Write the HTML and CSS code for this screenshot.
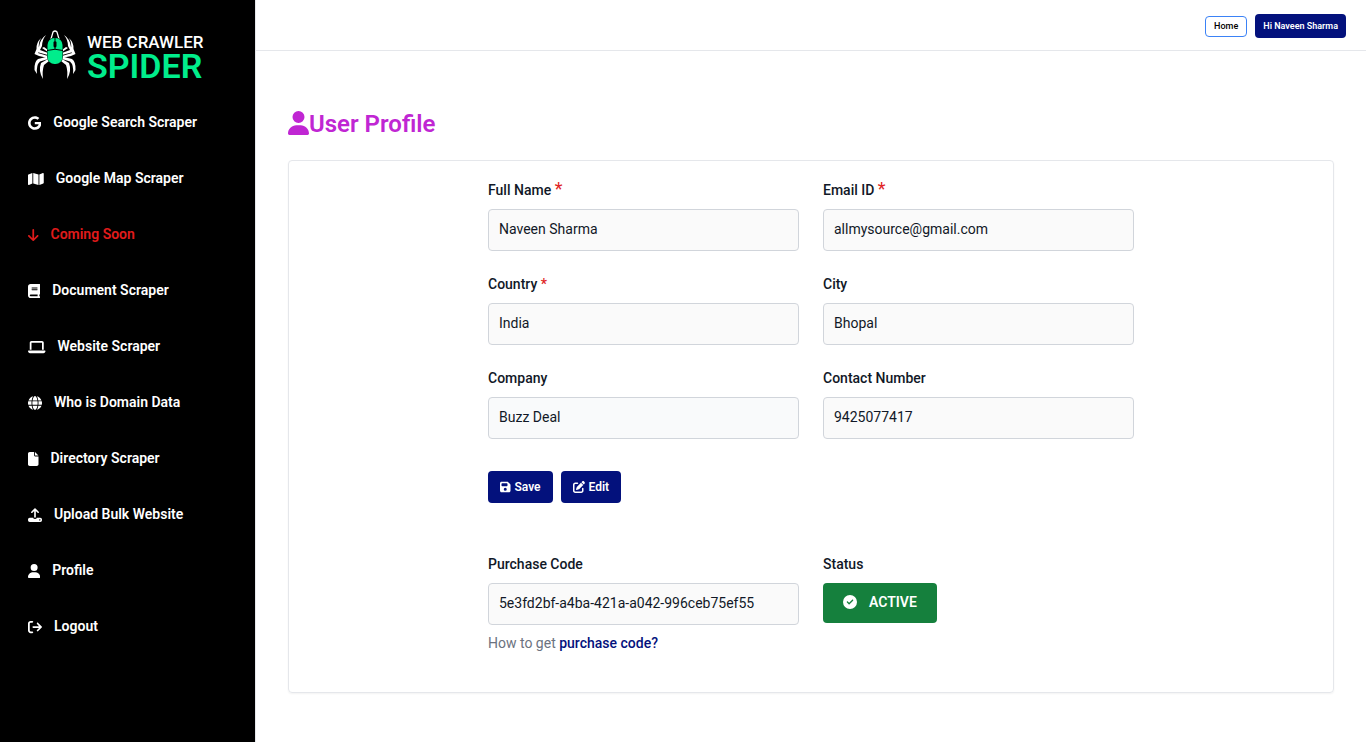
FILE: index.html
```html
<!DOCTYPE html>
<html lang="en">
<head>
<meta charset="utf-8">
<meta name="viewport" content="width=device-width, initial-scale=1">
<title>User Profile - Web Crawler Spider</title>
<link rel="stylesheet" href="styles.css">
</head>
<body>
<aside class="sidebar">
  <a class="brand" href="#">
    <svg class="brand-logo" viewBox="0 0 42 50" aria-hidden="true">
      <path d="M17 9 19 2Q21 0 23 2L25 9" fill="none" stroke="#fff" stroke-width="1.300"/>
      <g fill="#fff">
        <path d="M12 5Q6 9 5 17L3 22 14 25V23L6 20 8 16Q8 10 12 5ZM7 8Q2 13 2.500 19L.5 24 5 26 14 28V26L4 23 5 19Q4 13 7 8Z"/>
        <path d="M30 5Q36 9 37 17L39 22 28 25V23L36 20 34 16Q34 10 30 5ZM35 8Q40 13 39.500 19L41.500 24 37 26 28 28V26L38 23 37 19Q38 13 35 8Z"/>
        <path d="M10 17 14 20V22L8 18ZM32 17 28 20V22L34 18Z"/>
        <path d="M14 26.500 4 29Q0 32 .5 40L3 44Q2 35 6 31.500L14 29ZM14 29 7 33Q4 41 9 49Q8 41 10 35L15 31Z"/>
        <path d="M28 26.500 38 29Q42 32 41.500 40L39 44Q40 35 36 31.500L28 29ZM28 29 35 33Q38 41 33 49Q34 41 32 35L27 31Z"/>
      </g>
      <rect x="13" y="7.500" width="16" height="27" rx="8" fill="#000"/>
      <rect x="13.500" y="8" width="15" height="26" rx="7" fill="#00ed8c"/>
      <path d="M13 20.500Q21 18 29 20.500" fill="none" stroke="#000" stroke-width="1"/>
      <path d="M21 8V11M21 17V19" stroke="#000" stroke-width="1"/>
      <rect x="19.500" y="11" width="3" height="6.500" rx="1.500" fill="#000"/>
    </svg>
    <span class="brand-text"><span class="brand-top">WEB CRAWLER</span><span class="brand-bottom">SPIDER</span></span>
  </a>
  <nav class="nav">
    <a class="nav-link" href="#"><svg viewBox="0 0 488 512" aria-hidden="true"><path d="M488 261.800C488 403.300 391.100 504 248 504 110.800 504 0 393.200 0 256S110.800 8 248 8c66.800 0 123 24.500 166.300 64.900l-67.500 64.900C258.500 52.600 94.300 116.600 94.300 256c0 86.500 69.100 156.600 153.700 156.600 98.200 0 135-70.400 140.800-106.900H248v-85.300h236.100c2.300 12.700 3.900 24.900 3.900 41.400z"/></svg>Google Search Scraper</a>
    <a class="nav-link" href="#"><svg viewBox="0 0 576 512" aria-hidden="true"><path d="M384 476.100L192 421.200V35.900L384 90.800V476.100zm32-1.200V88.400L543.100 37.500c15.800-6.300 32.900 5.300 32.900 22.300V394.600c0 9.800-6 18.600-15.100 22.300L416 474.800zM15.100 95.100L160 37.200V423.600L32.900 474.500C17.100 480.800 0 469.200 0 452.200V117.400c0-9.800 6-18.600 15.100-22.300z"/></svg>Google Map Scraper</a>
    <a class="nav-link nav-soon" href="#"><svg viewBox="0 0 384 512" aria-hidden="true"><path d="M169.400 470.600c12.500 12.500 32.800 12.500 45.300 0l160-160c12.500-12.500 12.500-32.800 0-45.300s-32.800-12.500-45.300 0L224 370.800V64c0-17.700-14.300-32-32-32s-32 14.300-32 32v306.700L54.600 265.400c-12.500-12.500-32.800-12.500-45.300 0s-12.500 32.800 0 45.300l160 160z"/></svg>Coming Soon</a>
    <a class="nav-link" href="#"><svg viewBox="0 0 448 512" aria-hidden="true"><path d="M96 0C43 0 0 43 0 96V416c0 53 43 96 96 96H384h32c17.700 0 32-14.300 32-32s-14.300-32-32-32V384c17.700 0 32-14.300 32-32V32c0-17.700-14.300-32-32-32H384 96zm0 384H352v64H96c-17.700 0-32-14.300-32-32s14.300-32 32-32zm32-240c0-8.800 7.200-16 16-16H336c8.800 0 16 7.200 16 16s-7.200 16-16 16H144c-8.800 0-16-7.200-16-16zm16 48H336c8.800 0 16 7.200 16 16s-7.200 16-16 16H144c-8.800 0-16-7.200-16-16s7.200-16 16-16z"/></svg>Document Scraper</a>
    <a class="nav-link" href="#"><svg viewBox="0 0 640 512" aria-hidden="true"><path d="M128 32C92.700 32 64 60.700 64 96V352h64V96H512V352h64V96c0-35.300-28.700-64-64-64H128zM19.200 384C8.600 384 0 392.600 0 403.200C0 445.600 34.400 480 76.800 480H563.200c42.400 0 76.800-34.400 76.800-76.800c0-10.600-8.600-19.200-19.200-19.200H19.200z"/></svg>Website Scraper</a>
    <a class="nav-link" href="#"><svg viewBox="0 0 512 512" aria-hidden="true"><path d="M352 256c0 22.200-1.200 43.600-3.300 64H163.300c-2.200-20.400-3.300-41.800-3.300-64s1.200-43.600 3.300-64H348.700c2.200 20.400 3.300 41.800 3.300 64zm28.800-64H503.900c5.300 20.500 8.100 41.900 8.100 64s-2.800 43.500-8.100 64H380.800c2.100-20.600 3.200-42 3.200-64s-1.100-43.400-3.200-64zm112.600-32H376.700c-10-63.900-29.800-117.400-55.300-151.600c78.300 20.700 142 77.500 171.900 151.600zm-149.100 0H167.700c6.100-36.400 15.500-68.600 27-94.700c10.500-23.600 22.200-40.700 33.500-51.500C239.400 3.200 248.700 0 256 0s16.600 3.200 27.800 13.800c11.300 10.800 23 27.900 33.500 51.500c11.600 26 20.900 58.200 27 94.700zm-209 0H18.600C48.600 85.900 112.200 29.100 190.600 8.400C165.100 42.600 145.300 96.100 135.300 160zM8.100 192H131.200c-2.100 20.600-3.200 42-3.200 64s1.100 43.400 3.200 64H8.100C2.800 299.500 0 278.100 0 256s2.800-43.500 8.100-64zM194.700 446.600c-11.600-26-20.900-58.200-27-94.600H344.300c-6.100 36.400-15.500 68.600-27 94.600c-10.500 23.600-22.200 40.700-33.500 51.500C272.600 508.800 263.300 512 256 512s-16.600-3.200-27.800-13.800c-11.300-10.800-23-27.900-33.500-51.500zM135.300 352c10 63.900 29.800 117.400 55.300 151.600C112.200 482.900 48.600 426.100 18.600 352H135.300zm358.100 0c-30 74.100-93.600 130.900-171.900 151.600c25.500-34.200 45.200-87.700 55.300-151.600H493.400z"/></svg>Who is Domain Data</a>
    <a class="nav-link" href="#"><svg viewBox="0 0 384 512" aria-hidden="true"><path d="M0 64C0 28.700 28.700 0 64 0H224V128c0 17.700 14.300 32 32 32H384V448c0 35.300-28.700 64-64 64H64c-35.300 0-64-28.700-64-64V64zm384 64H256V0L384 128z"/></svg>Directory Scraper</a>
    <a class="nav-link" href="#"><svg viewBox="0 0 512 512" aria-hidden="true"><path d="M256 330V45M140 155 256 40 372 155" fill="none" stroke="currentColor" stroke-width="60" stroke-linecap="round" stroke-linejoin="round"/><path fill-rule="evenodd" d="M64 352H192Q192 400 256 400T320 352H448Q512 352 512 416V448Q512 512 448 512H64Q0 512 0 448V416Q0 352 64 352ZM432 408a24 24 0 1 0 .1 0Z"/></svg>Upload Bulk Website</a>
    <a class="nav-link" href="#"><svg viewBox="0 0 448 512" aria-hidden="true"><path d="M224 256A128 128 0 1 0 224 0a128 128 0 1 0 0 256zm-45.700 48C79.800 304 0 383.800 0 482.300C0 498.700 13.300 512 29.700 512H418.300c16.400 0 29.700-13.300 29.700-29.700C448 383.800 368.200 304 269.700 304H178.300z"/></svg>Profile</a>
    <a class="nav-link" href="#"><svg viewBox="0 0 512 512" aria-hidden="true"><path d="M502.600 278.600c12.500-12.500 12.500-32.800 0-45.300l-128-128c-12.500-12.500-32.800-12.500-45.300 0s-12.500 32.800 0 45.300L402.700 224H192c-17.700 0-32 14.300-32 32s14.300 32 32 32h210.700l-73.400 73.400c-12.500 12.500-12.500 32.800 0 45.300s32.800 12.500 45.300 0l128-128zM160 96c17.700 0 32-14.300 32-32s-14.300-32-32-32H96C43 32 0 75 0 128v256c0 53 43 96 96 96h64c17.700 0 32-14.300 32-32s-14.300-32-32-32H96c-17.700 0-32-14.300-32-32V128c0-17.700 14.300-32 32-32h64z"/></svg>Logout</a>
  </nav>
</aside>
<div class="page">
  <header class="topbar">
    <a class="btn-home" href="#">Home</a>
    <button class="btn-user" type="button">Hi Naveen Sharma</button>
  </header>
  <main class="content">
    <h1 class="title"><svg viewBox="0 0 448 512" aria-hidden="true"><path d="M224 256A128 128 0 1 0 224 0a128 128 0 1 0 0 256zm-45.700 48C79.800 304 0 383.800 0 482.300C0 498.700 13.300 512 29.700 512H418.300c16.400 0 29.700-13.300 29.700-29.700C448 383.800 368.200 304 269.700 304H178.300z"/></svg>User Profile</h1>
    <section class="card">
      <form class="form">
        <div class="grid">
          <div class="field"><label for="name">Full Name <span class="req req-large">*</span></label><input id="name" type="text" value="Naveen Sharma"></div>
          <div class="field"><label for="email">Email ID <span class="req req-large">*</span></label><input id="email" type="email" value="allmysource@gmail.com"></div>
          <div class="field"><label for="country">Country <span class="req">*</span></label><input id="country" type="text" value="India"></div>
          <div class="field"><label for="city">City</label><input id="city" type="text" value="Bhopal"></div>
          <div class="field"><label for="company">Company</label><input id="company" class="input-cool" type="text" value="Buzz Deal"></div>
          <div class="field"><label for="phone">Contact Number</label><input id="phone" type="text" value="9425077417"></div>
        </div>
        <div class="actions">
          <button class="btn" type="button"><svg viewBox="0 0 448 512" aria-hidden="true"><path fill-rule="evenodd" d="M64 32C28.700 32 0 60.700 0 96V416c0 35.300 28.700 64 64 64H384c35.300 0 64-28.700 64-64V173.300c0-17-6.700-33.300-18.700-45.300L352 50.700C340 38.700 323.700 32 306.700 32H64zm0 96c0-17.700 14.300-32 32-32H288c17.700 0 32 14.300 32 32v64c0 17.700-14.300 32-32 32H96c-17.700 0-32-14.300-32-32V128zM224 288a64 64 0 1 1 0 128 64 64 0 1 1 0-128z"/></svg>Save</button>
          <button class="btn" type="button"><svg viewBox="0 0 512 512" aria-hidden="true"><path d="M471.600 21.700c-21.900-21.900-57.300-21.900-79.200 0L362.300 51.700l97.900 97.900 30.100-30.100c21.900-21.900 21.900-57.300 0-79.200L471.600 21.700zm-299.200 220c-6.100 6.100-10.800 13.600-13.500 21.900l-29.600 88.800c-2.900 8.600-.6 18.100 5.800 24.600s15.900 8.700 24.600 5.800l88.800-29.600c8.200-2.700 15.700-7.400 21.900-13.500L437.700 172.300 339.700 74.300 172.400 241.700zM96 64C43 64 0 107 0 160V416c0 53 43 96 96 96H352c53 0 96-43 96-96V320c0-17.700-14.300-32-32-32s-32 14.300-32 32v96c0 17.700-14.300 32-32 32H96c-17.700 0-32-14.300-32-32V160c0-17.700 14.300-32 32-32h96c17.700 0 32-14.300 32-32s-14.300-32-32-32H96z"/></svg>Edit</button>
        </div>
        <div class="grid">
          <div class="field"><label for="code">Purchase Code</label><input id="code" type="text" value="5e3fd2bf-a4ba-421a-a042-996ceb75ef55"><p class="hint">How to get <a href="#">purchase code?</a></p></div>
          <div class="field"><span class="label">Status</span><button class="btn-status" type="button"><svg viewBox="0 0 512 512" aria-hidden="true"><path fill-rule="evenodd" d="M256 512A256 256 0 1 0 256 0a256 256 0 1 0 0 512zM369 209L241 337c-9.400 9.400-24.600 9.400-33.900 0l-64-64c-9.400-9.400-9.400-24.600 0-33.900s24.600-9.400 33.900 0l47 47L335 175c9.400-9.400 24.600-9.400 33.900 0s9.400 24.600 0 33.900z"/></svg>ACTIVE</button></div>
        </div>
      </form>
    </section>
  </main>
</div>
</body>
</html>
```
FILE: styles.css
```css
* {
  box-sizing: border-box;
}

body {
  display: flex;
  min-height: 100vh;
  margin: 0;
  background: #fff;
  color: #111827;
  font: 14px/20px Roboto, "Liberation Sans", sans-serif;
}

a {
  color: inherit;
  text-decoration: none;
}

button,
input {
  font: inherit;
}

svg {
  display: block;
  flex: none;
  fill: currentColor;
}

.sidebar {
  flex: 0 0 256px;
  border-right: 1px solid #e5e7eb;
  background: #000;
  color: #fff;
}

.brand {
  display: flex;
  gap: 11px;
  padding: 30px 34px 0;
}

.brand-logo {
  height: 50px;
}

.brand-text {
  display: flex;
  flex-direction: column;
  padding-top: 3px;
  font-weight: 500;
  white-space: nowrap;
}

.brand-top {
  font-size: 17px;
  line-height: 18px;
}

.brand-bottom {
  color: #00ed8c;
  font-size: 34px;
  font-weight: 600;
  line-height: 30px;
}

.nav {
  display: flex;
  flex-direction: column;
  gap: 36px;
  padding: 31px 28px;
}

.nav-link {
  display: flex;
  gap: 12px;
  font-weight: 600;
}

.nav-link svg {
  height: 14px;
  margin-top: 4px;
}

.nav-soon {
  color: #e01b1b;
}

.page {
  flex: 1;
  min-width: 0;
}

.topbar {
  display: flex;
  align-items: center;
  justify-content: flex-end;
  gap: 8px;
  padding: 14px 20px 12px;
  border-bottom: 1px solid #e5e7eb;
}

.btn-home {
  padding: 2px 8px;
  border: 1px solid #3b82f6;
  border-radius: 4px;
  color: #000;
  font-size: 9px;
  font-weight: 500;
  line-height: 15px;
}

.btn-user {
  padding: 4px 8px;
  border: 0;
  border-radius: 4px;
  background: #03117c;
  color: #fff;
  font-size: 9px;
  font-weight: 600;
  line-height: 16px;
}

.content {
  padding: 57px 32px 48px;
}

.title {
  display: flex;
  margin: 0 0 20px;
  color: #c026d3;
  font-size: 24px;
  font-weight: 600;
  line-height: 32px;
}

.title svg {
  height: 24px;
  margin-top: 3px;
}

.card {
  padding: 20px 16px 39px;
  border: 1px solid #e5e7eb;
  border-radius: 4px;
  box-shadow: 0 1px 2px rgba(0, 0, 0, 0.05);
}

.form {
  max-width: 646px;
  margin: 0 auto;
}

.grid {
  display: grid;
  grid-template-columns: 1fr 1fr;
  gap: 24px;
}

.field label,
.label {
  display: block;
  height: 20px;
  margin-bottom: 8px;
  font-weight: 500;
  line-height: 18px;
}

.req {
  color: #e02424;
}

.req-large {
  font-size: 18px;
  font-weight: 400;
  line-height: 12px;
}

.field input {
  display: block;
  width: 100%;
  height: 42px;
  padding: 0 10px 2px;
  border: 1px solid #d1d5db;
  border-radius: 4px;
  background: #fafafa;
  color: #111827;
}

.field .input-cool {
  background: #f9fafb;
}

.actions {
  display: flex;
  gap: 8px;
  margin: 32px 0 52px;
}

.btn {
  display: flex;
  align-items: center;
  gap: 4px;
  padding: 8px 12px;
  border: 0;
  border-radius: 4px;
  background: #03117c;
  color: #fff;
  font-size: 12px;
  font-weight: 600;
  line-height: 16px;
}

.btn svg {
  height: 12px;
}

.hint {
  margin: 8px 0 0;
  color: #6b7280;
  line-height: 20px;
}

.hint a {
  color: #03117c;
  font-weight: 500;
}

.btn-status {
  display: flex;
  align-items: center;
  gap: 12px;
  padding: 9px 20px 11px;
  border: 0;
  border-radius: 4px;
  background: #15803d;
  color: #fff;
  font-weight: 600;
}

.btn-status svg {
  height: 14px;
}
```
